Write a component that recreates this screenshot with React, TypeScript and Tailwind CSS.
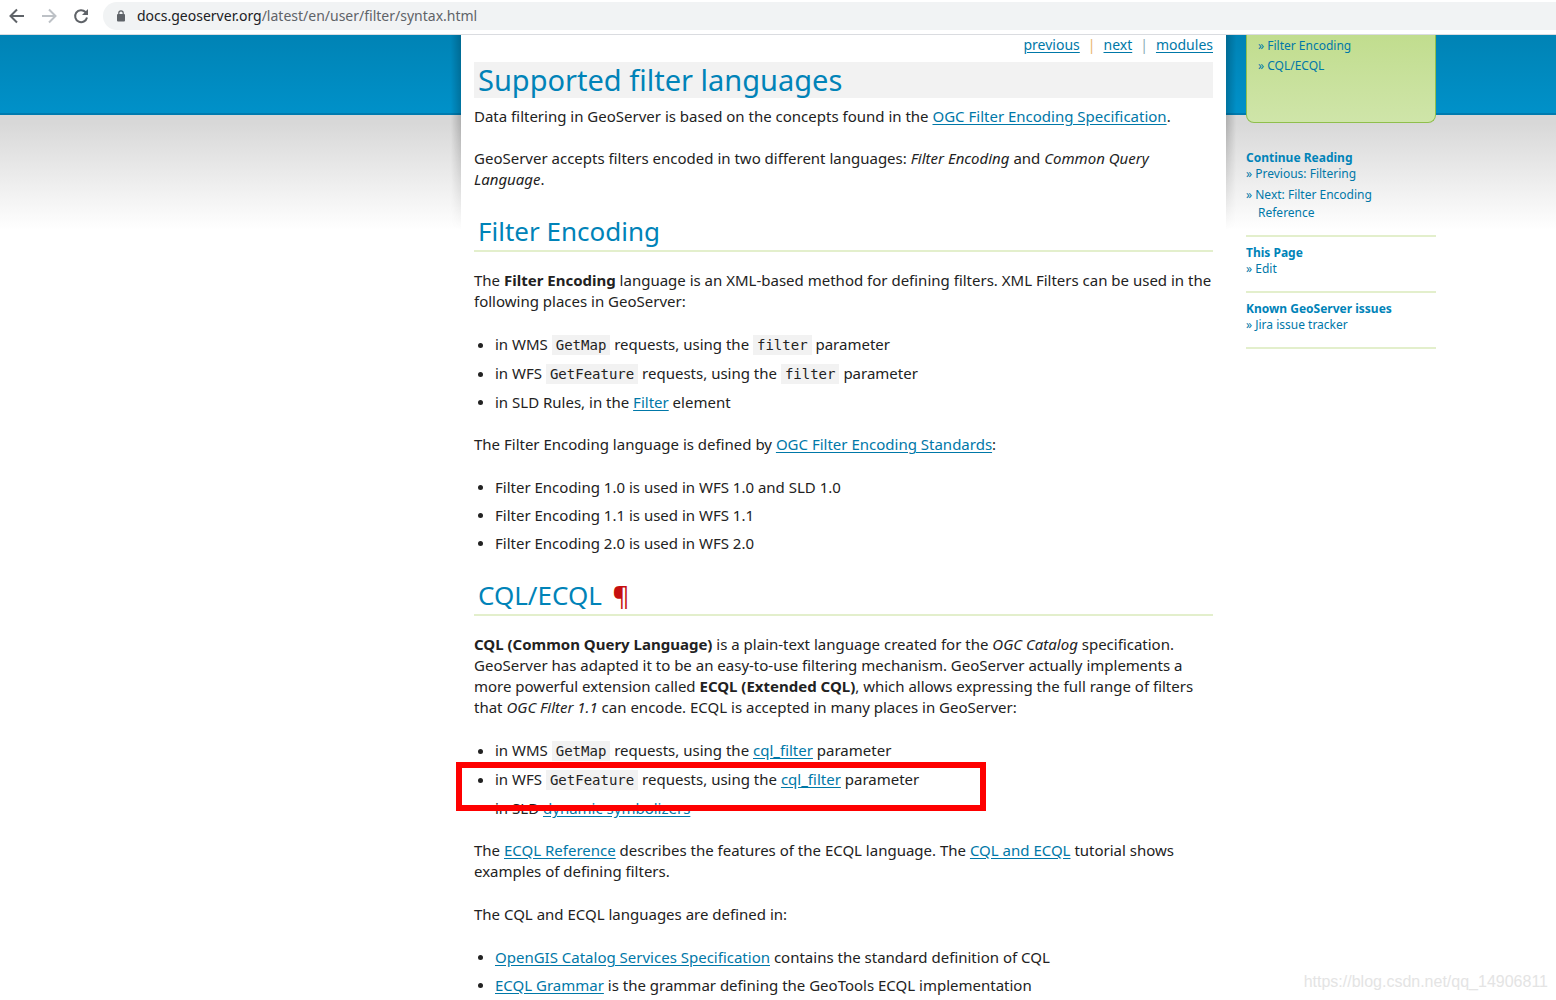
import React from 'react';

interface LinkProps {
    children: React.ReactNode;
}

const DocLink = ({ children }: LinkProps) => (
    <a href="#" className="text-[#0078a8] underline underline-offset-2">{children}</a>
);

const SideLink = ({ children }: LinkProps) => (
    <a href="#" className="text-[#0078a8]">{children}</a>
);

const Code = ({ children }: { children: string }) => (
    <code className="my-px inline-block bg-[#f2f2f2] px-1 font-['DejaVu_Sans_Mono',monospace] text-sm leading-5">{children}</code>
);

const SectionTitle = ({ children }: { children: React.ReactNode }) => (
    <h2 className="mt-[23px] border-b-2 border-[#e3efcc] px-1 pb-px text-[26px] leading-9 text-[#0083b8]">{children}</h2>
);

const BulletList = ({ children }: { children: React.ReactNode }) => (
    <ul className="mt-[22px] flex list-none flex-col gap-[7px]">{children}</ul>
);

const Bullet = ({ children, highlight }: { children: React.ReactNode; highlight?: boolean }) => (
    <li className="relative flex items-center">
        <span className="mr-3 ml-1 size-[5px] shrink-0 rounded-full bg-[#222]"></span>
        <span>{children}</span>
        {highlight && (
            <span className="pointer-events-none absolute -top-[7px] -left-[18px] z-10 h-[49px] w-[530px] border-6 border-[#fe0000]"></span>
        )}
    </li>
);

const SideSection = ({ title, children }: { title: string; children: React.ReactNode }) => (
    <section className="mb-[9px] border-b-2 border-[#e3efcc] pb-[13px]">
        <h3 className="text-xs leading-[14px] font-bold text-[#0083b8]">{title}</h3>
        <ul className="flex flex-col gap-[3px] pl-3 -indent-3 leading-[18px]">{children}</ul>
    </section>
);

const BrowserBar = () => (
    <header className="flex h-[35px] items-center border-b border-[#dadce0] bg-white pb-[3px] pl-[9px]">
        <button type="button" aria-label="Back" className="mr-4 text-[#5f6368]">
            <svg width="16" height="16" viewBox="0 0 16 16" fill="none" stroke="currentColor" strokeWidth="2">
                <path d="M15 8H2M8 1.5 1.5 8 8 14.5" />
            </svg>
        </button>
        <button type="button" aria-label="Forward" className="mr-4 text-[#bdc1c6]">
            <svg width="16" height="16" viewBox="0 0 16 16" fill="none" stroke="currentColor" strokeWidth="2">
                <path d="M1 8H14M8 1.5 14.5 8 8 14.5" />
            </svg>
        </button>
        <button type="button" aria-label="Reload" className="mr-[14px] text-[#5f6368]">
            <svg width="16" height="16" viewBox="0 0 16 16" fill="none" stroke="currentColor" strokeWidth="2">
                <path d="M14 9.5A6 6 0 1 1 12.5 4L14 5.5" />
                <path d="M15 1V7H9Z" fill="currentColor" stroke="none" />
            </svg>
        </button>
        <div className="flex h-7 flex-1 items-center rounded-l-full bg-[#f1f3f4] pl-[14px]">
            <svg width="8" height="12" viewBox="0 0 8 12" className="mr-3 text-[#5f6368]">
                <rect x="0" y="4" width="8" height="7.5" rx="1" fill="currentColor" />
                <path d="M1.8 5V3A2.2 2.2 0 0 1 6.2 3V5" fill="none" stroke="currentColor" strokeWidth="1.2" />
            </svg>
            <span className="text-sm text-[#202124]">
                docs.geoserver.org<span className="text-[#5f6368]">/latest/en/user/filter/syntax.html</span>
            </span>
        </div>
    </header>
);

const App = () => {
    return (
        <div className="relative min-h-screen overflow-hidden bg-white font-['Noto_Sans',sans-serif] text-[#222]">
            <BrowserBar />
            <div className="bg-[linear-gradient(to_bottom,#0083b5_0px,#0091c9_78px,#007baf_78px,#007baf_80px,#d8d8d8_80px,#d8d8d8_88px,#ffffff_195px)]">
                <div className="mx-auto flex max-w-[1316px]">
                    {/* Left shadow of the content column */}
                    <div className="flex flex-1 justify-end">
                        <div className="h-[195px] w-[10px] bg-linear-to-r from-transparent to-black/20 mask-b-from-40%"></div>
                    </div>

                    <main className="w-[765px] bg-white px-[13px] pb-1 text-[15px] leading-[21px]">
                        <nav className="flex justify-end gap-2 text-sm leading-5">
                            <DocLink>previous</DocLink>
                            <span className="text-[#e9b46c]">|</span>
                            <DocLink>next</DocLink>
                            <span className="text-[#8aa9b5]">|</span>
                            <DocLink>modules</DocLink>
                        </nav>

                        <h1 className="mt-[7px] bg-[#f2f2f2] px-1 text-[29px] leading-9 text-[#0083b8]">Supported filter languages</h1>
                        <p className="mt-2">
                            Data filtering in GeoServer is based on the concepts found in the <DocLink>OGC Filter Encoding Specification</DocLink>.
                        </p>
                        <p className="mt-[21px]">
                            GeoServer accepts filters encoded in two different languages: <em>Filter Encoding</em> and <em>Common Query<br />Language</em>.
                        </p>

                        <SectionTitle>Filter Encoding</SectionTitle>
                        <p className="mt-[18px]">
                            The <strong>Filter Encoding</strong> language is an XML-based method for defining filters. XML Filters can be used in the<br />
                            following places in GeoServer:
                        </p>
                        <BulletList>
                            <Bullet>in WMS <Code>GetMap</Code> requests, using the <Code>filter</Code> parameter</Bullet>
                            <Bullet>in WFS <Code>GetFeature</Code> requests, using the <Code>filter</Code> parameter</Bullet>
                            <Bullet>in SLD Rules, in the <DocLink>Filter</DocLink> element</Bullet>
                        </BulletList>
                        <p className="mt-[21px]">
                            The Filter Encoding language is defined by <DocLink>OGC Filter Encoding Standards</DocLink>:
                        </p>
                        <BulletList>
                            <Bullet>Filter Encoding 1.0 is used in WFS 1.0 and SLD 1.0</Bullet>
                            <Bullet>Filter Encoding 1.1 is used in WFS 1.1</Bullet>
                            <Bullet>Filter Encoding 2.0 is used in WFS 2.0</Bullet>
                        </BulletList>

                        <SectionTitle>
                            CQL/ECQL <a href="#" className="ml-1 text-[#c60f0f]">¶</a>
                        </SectionTitle>
                        <p className="mt-[18px]">
                            <strong>CQL (Common Query Language)</strong> is a plain-text language created for the <em>OGC Catalog</em> specification.<br />
                            GeoServer has adapted it to be an easy-to-use filtering mechanism. GeoServer actually implements a<br />
                            more powerful extension called <strong>ECQL (Extended CQL)</strong>, which allows expressing the full range of filters<br />
                            that <em>OGC Filter 1.1</em> can encode. ECQL is accepted in many places in GeoServer:
                        </p>
                        <BulletList>
                            <Bullet>in WMS <Code>GetMap</Code> requests, using the <DocLink>cql_filter</DocLink> parameter</Bullet>
                            <Bullet highlight>in WFS <Code>GetFeature</Code> requests, using the <DocLink>cql_filter</DocLink> parameter</Bullet>
                            <Bullet>in SLD <DocLink>dynamic symbolizers</DocLink></Bullet>
                        </BulletList>
                        <p className="mt-[21px]">
                            The <DocLink>ECQL Reference</DocLink> describes the features of the ECQL language. The <DocLink>CQL and ECQL</DocLink> tutorial shows<br />
                            examples of defining filters.
                        </p>
                        <p className="mt-[22px]">The CQL and ECQL languages are defined in:</p>
                        <BulletList>
                            <Bullet><DocLink>OpenGIS Catalog Services Specification</DocLink> contains the standard definition of CQL</Bullet>
                            <Bullet><DocLink>ECQL Grammar</DocLink> is the grammar defining the GeoTools ECQL implementation</Bullet>
                        </BulletList>
                    </main>

                    {/* Right shadow of the content column */}
                    <div className="w-5">
                        <div className="h-[195px] w-[10px] bg-linear-to-l from-transparent to-black/20 mask-b-from-40%"></div>
                    </div>

                    <aside className="w-[190px] text-xs text-[#0078a8]">
                        <ul className="h-[88px] rounded-b-lg border border-t-0 border-[#8fbf4d] bg-linear-to-b from-[#c1dd8e] to-[#cfe5a9] pt-px pl-[11px] leading-5">
                            <li>» <SideLink>Filter Encoding</SideLink></li>
                            <li>» <SideLink>CQL/ECQL</SideLink></li>
                        </ul>
                        <div className="mt-7">
                            <SideSection title="Continue Reading">
                                <li>» <SideLink>Previous: Filtering</SideLink></li>
                                <li>» <SideLink>Next: Filter Encoding<br />Reference</SideLink></li>
                            </SideSection>
                            <SideSection title="This Page">
                                <li>» <SideLink>Edit</SideLink></li>
                            </SideSection>
                            <SideSection title="Known GeoServer issues">
                                <li>» <SideLink>Jira issue tracker</SideLink></li>
                            </SideSection>
                        </div>
                    </aside>
                </div>
            </div>
            <span className="absolute right-2 bottom-2 font-['Liberation_Sans',sans-serif] text-base leading-5 text-[#e4e4e4]">
                https://blog.csdn.net/qq_14906811
            </span>
        </div>
    );
};

export default App;
